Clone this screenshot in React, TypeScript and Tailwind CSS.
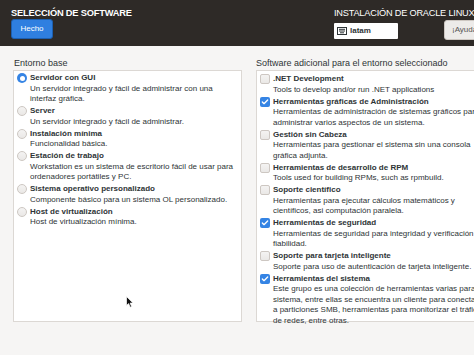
import { Check } from "lucide-react";

type Item = { title: string; desc: string[]; on?: boolean };

const bases: Item[] = [
  {
    title: "Servidor con GUI",
    desc: ["Un servidor integrado y fácil de administrar con una", "interfaz gráfica."],
    on: true,
  },
  { title: "Server", desc: ["Un servidor integrado y fácil de administrar."] },
  { title: "Instalación mínima", desc: ["Funcionalidad básica."] },
  {
    title: "Estación de trabajo",
    desc: ["Workstation es un sistema de escritorio fácil de usar para", "ordenadores portátiles y PC."],
  },
  {
    title: "Sistema operativo personalizado",
    desc: ["Componente básico para un sistema OL personalizado."],
  },
  { title: "Host de virtualización", desc: ["Host de virtualización mínima."] },
];

const addons: Item[] = [
  { title: ".NET Development", desc: ["Tools to develop and/or run .NET applications"] },
  {
    title: "Herramientas gráficas de Administración",
    desc: ["Herramientas de administración de sistemas gráficos para", "administrar varios aspectos de un sistema."],
    on: true,
  },
  {
    title: "Gestión sin Cabeza",
    desc: ["Herramientas para gestionar el sistema sin una consola", "gráfica adjunta."],
  },
  {
    title: "Herramientas de desarrollo de RPM",
    desc: ["Tools used for building RPMs, such as rpmbuild."],
  },
  {
    title: "Soporte científico",
    desc: ["Herramientas para ejecutar cálculos matemáticos y", "científicos, asi computación paralela."],
  },
  {
    title: "Herramientas de seguridad",
    desc: ["Herramientas de seguridad para integridad y verificación de", "fiabilidad."],
    on: true,
  },
  {
    title: "Soporte para tarjeta inteligente",
    desc: ["Soporte para uso de autenticación de tarjeta inteligente."],
  },
  {
    title: "Herramientas del sistema",
    desc: [
      "Este grupo es una colección de herramientas varias para el",
      "sistema, entre ellas se encuentra un cliente para conectar",
      "a particiones SMB, herramientas para monitorizar el tráfico",
      "de redes, entre otras.",
    ],
    on: true,
  },
];

function Radio({ on }: { on?: boolean }) {
  if (on) {
    return (
      <span className="w-[10px] h-[10px] rounded-full bg-[#3584e4] flex items-center justify-center shrink-0">
        <span className="w-[5px] h-[5px] rounded-full bg-white" />
      </span>
    );
  }
  return (
    <span className="w-[10px] h-[10px] rounded-full border border-[#cdc7c2] bg-gradient-to-b from-[#f4f3f2] to-[#eae8e6] shrink-0" />
  );
}

function Box({ on }: { on?: boolean }) {
  if (on) {
    return (
      <span className="w-[10px] h-[10px] rounded-[2px] bg-[#3584e4] flex items-center justify-center shrink-0">
        <Check size={8} strokeWidth={4} color="white" />
      </span>
    );
  }
  return (
    <span className="w-[10px] h-[10px] rounded-[2px] border border-[#cdc7c2] bg-gradient-to-b from-[#f4f3f2] to-[#eae8e6] shrink-0" />
  );
}

function Row({ item, radio }: { item: Item; radio?: boolean }) {
  return (
    <div className="flex gap-[3px]">
      <div className="h-[10.5px] flex items-center">
        {radio ? <Radio on={item.on} /> : <Box on={item.on} />}
      </div>
      <div className="whitespace-nowrap">
        <div className="font-bold text-[#2e3436]">{item.title}</div>
        {item.desc.map((d) => (
          <div key={d} className="text-[#2e3436]">
            {d}
          </div>
        ))}
      </div>
    </div>
  );
}

function Pointer() {
  return (
    <svg className="absolute left-[126px] top-[296px]" width="8" height="12" viewBox="0 0 8 12">
      <path d="M0.5 0.5 L0.5 9.5 L2.6 7.6 L4.2 11.2 L5.6 10.6 L4.1 7.1 L7 7.1 Z" fill="#111" stroke="#fff" strokeWidth="0.7" />
    </svg>
  );
}

export default function App() {
  return (
    <div className="relative w-[474px] h-[355px] overflow-hidden bg-[#f6f5f4] font-['Liberation_Sans',sans-serif] text-[8px] leading-[10.5px]">
      <div className="h-[46px] bg-[#2e2a27] flex justify-between pl-[11px]">
        <div className="flex flex-col pt-[7px]">
          <div className="text-white font-bold text-[9.3px] leading-[12px] tracking-[-0.2px]">SELECCIÓN DE SOFTWARE</div>
          <button className="mt-[0px] w-[42px] h-[20px] rounded-[3px] bg-[#2f7fe0] text-white text-[8px] border border-[#1c5fb0]">
            Hecho
          </button>
        </div>
        <div className="w-[140px] shrink-0 flex flex-col pt-[7px]">
          <div className="text-white text-[9.2px] leading-[12px] whitespace-nowrap tracking-[-0.2px]">
            INSTALACIÓN DE ORACLE LINUX
          </div>
          <div className="flex items-start">
            <div className="w-[64px] h-[16px] mt-[4px] shrink-0 bg-white rounded-[1px] flex items-center gap-[3px] pl-[3px]">
              <svg width="10" height="8" viewBox="0 0 10 8">
                <rect x="0.5" y="0.5" width="9" height="7" fill="none" stroke="#2e3436" strokeWidth="1" />
                <path d="M2 2.3h6M2 4h6M3 5.8h4" stroke="#2e3436" strokeWidth="1" />
              </svg>
              <span className="font-bold text-[#2e3436] text-[8px]">latam</span>
            </div>
            <div className="ml-[46px] mt-[1px] w-[40px] h-[20px] shrink-0 rounded-[3px] bg-[#edebe9] border border-[#cdc7c2] flex items-center pl-[7px] text-[#555] text-[8px] whitespace-nowrap">
              ¡Ayuda!
            </div>
          </div>
        </div>
      </div>

      <div className="flex gap-[14px] pl-[13px] pt-[12px]">
        <div className="w-[229px] shrink-0 flex flex-col">
          <div className="text-[#2e3436] text-[9px] leading-[10px] pl-[1px] mb-[2px]">Entorno base</div>
          <div className="h-[252px] bg-white border border-[#dcd8d4] pl-[3px] pt-[2px] flex flex-col gap-[1.5px]">
            {bases.map((b) => (
              <Row key={b.title} item={b} radio />
            ))}
          </div>
        </div>
        <div className="w-[240px] shrink-0 flex flex-col">
          <div className="text-[#2e3436] text-[9px] leading-[10px] mb-[2px] whitespace-nowrap">
            Software adicional para el entorno seleccionado
          </div>
          <div className="h-[252px] bg-white border border-[#dcd8d4] pl-[3px] pt-[3px] flex flex-col gap-[1.5px]">
            {addons.map((a) => (
              <Row key={a.title} item={a} />
            ))}
          </div>
        </div>
      </div>
      <Pointer />
    </div>
  );
}
